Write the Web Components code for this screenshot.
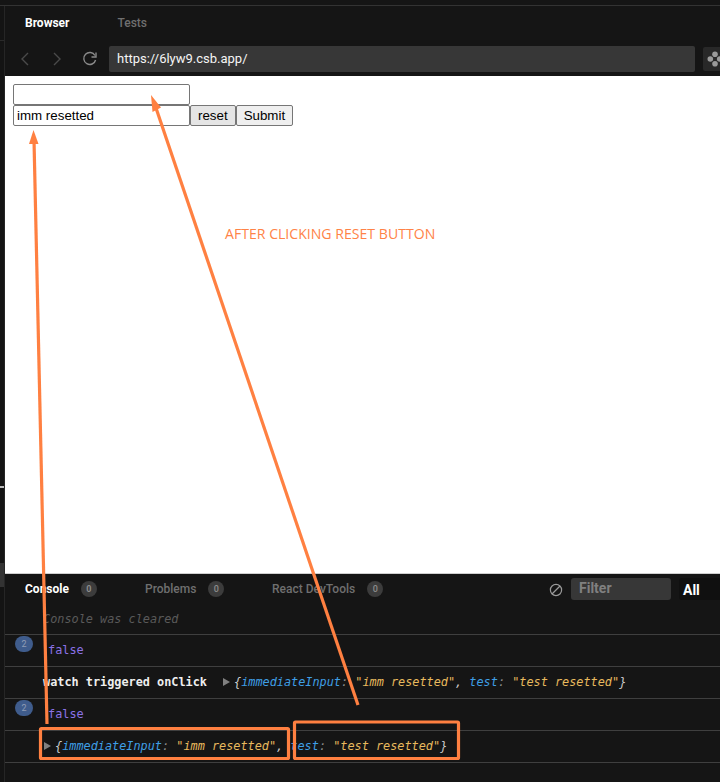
<!DOCTYPE html>
<html>
<head>
<meta charset="utf-8">
<style>
html, body { margin: 0; padding: 0; background: #151515; }
body { width: 720px; height: 782px; overflow: hidden; font-family: Roboto, "Liberation Sans", sans-serif; }
</style>
</head>
<body>
<sandbox-shell>
	<browser-panel url="https://6lyw9.csb.app/">
		<demo-form></demo-form>
	</browser-panel>
	<console-panel>
		<console-row kind="info">Console was cleared</console-row>
		<console-row count="2"><span style="color:#8b72e6">false</span></console-row>
		<console-row kind="log"><b style="color:#eee;font-weight:600;margin-right:15px">watch triggered onClick</b><log-object></log-object></console-row>
		<console-row count="2"><span style="color:#8b72e6">false</span></console-row>
		<console-row kind="log"><log-object></log-object></console-row>
	</console-panel>
	<note-overlay slot="overlay"></note-overlay>
</sandbox-shell>

<script>
const mono = '"DejaVu Sans Mono", "Liberation Mono", monospace';

class SandboxShell extends HTMLElement {
	constructor() {
		super();
		this.attachShadow({ mode: 'open' });
		this.shadowRoot.innerHTML = `
			<style>
				:host { display: block; position: relative; width: 720px; height: 782px; background: #151515; overflow: hidden; }
				.top { height: 5px; border-bottom: 1px solid #333; }
				.body { display: flex; height: 776px; }
				.rail { width: 4px; flex: none; background: #141414; border-right: 1px solid #262626; }
				.rail i { display: block; height: 1px; background: #2a2a2a; margin-top: 34px; }
				.rail u { display: block; height: 2px; background: #bbb; margin-top: 445px; }
				.rail b { display: block; height: 24px; background: #333; margin-top: 75px; }
				.main { flex: 1; min-width: 0; display: flex; flex-direction: column; }
			</style>
			<div class="top"></div>
			<div class="body">
				<div class="rail"><i></i><u></u><b></b></div>
				<div class="main"><slot></slot></div>
			</div>
			<slot name="overlay"></slot>
		`;
	}
}

class TabItem extends HTMLElement {
	constructor() {
		super();
		this.attachShadow({ mode: 'open' });
		this.shadowRoot.innerHTML = `
			<style>
				:host { display: inline-flex; align-items: center; font: 500 12px Roboto, sans-serif; color: #6f6f6f; }
				:host([active]) { color: #fff; font-weight: 700; }
				.badge { display: none; width: 16px; height: 16px; border-radius: 50%; background: #3c3c3c; color: #8c8c8c;
					font-size: 9px; line-height: 16px; text-align: center; margin-left: 12px; }
				:host([badge]) .badge { display: block; }
			</style>
			<slot></slot><span class="badge">${this.getAttribute('badge') || ''}</span>
		`;
	}
}

class BrowserPanel extends HTMLElement {
	constructor() {
		super();
		this.attachShadow({ mode: 'open' });
		this.shadowRoot.innerHTML = `
			<style>
				:host { display: flex; flex-direction: column; height: 567px; flex: none; }
				.tabs { height: 34px; margin-bottom: 6px; display: flex; align-items: center; padding: 0 0 0 20px; gap: 48px; flex: none; }
				.bar { height: 30px; display: flex; align-items: flex-start; flex: none; }
				.nav { width: 104px; height: 26px; flex: none; }
				.nav svg { display: block; }
				.url { width: 586px; height: 26px; background: #373737; border-radius: 2px; flex: none; box-sizing: border-box;
					padding-left: 8px; color: #f5f5f5; font: 400 13px/26px Roboto, sans-serif; }
				.more { width: 30px; height: 24px; margin: 1px 0 0 8px; background: #282828; border-radius: 2px; flex: none; }
				.more svg { display: block; }
				.page { flex: 1; background: #fff; box-sizing: border-box; padding: 8px; color: #000; }
			</style>
			<div class="tabs">
				<tab-item active>Browser</tab-item>
				<tab-item>Tests</tab-item>
			</div>
			<div class="bar">
				<div class="nav">
					<svg width="104" height="26" viewBox="0 0 104 26" fill="none">
						<path d="M23 7 L17 13 L23 19" stroke="#4a4a4a" stroke-width="1.4"/>
						<path d="M49 7 L55 13 L49 19" stroke="#4a4a4a" stroke-width="1.4"/>
						<path d="M90 9.5 A6 6 0 1 0 90.6 14" stroke="#8a8a8a" stroke-width="1.4"/>
						<path d="M91 6.5 V11 H86.5" stroke="#8a8a8a" stroke-width="1.4"/>
					</svg>
				</div>
				<div class="url">${this.getAttribute('url')}</div>
				<div class="more">
					<svg width="30" height="24" viewBox="0 0 30 24">
						<g fill="#9a9a9a">
							<circle cx="12" cy="7.3" r="2.8"/><circle cx="12" cy="16.7" r="2.8"/>
							<circle cx="7.3" cy="12" r="2.8"/><circle cx="16.7" cy="12" r="2.8"/>
						</g>
					</svg>
				</div>
			</div>
			<div class="page"><slot></slot></div>
		`;
	}
}

class DemoForm extends HTMLElement {
	constructor() {
		super();
		this.attachShadow({ mode: 'open' });
		this.shadowRoot.innerHTML = `
			<style>
				:host { display: block; font: 13.33px "Liberation Sans", sans-serif; }
				.row { display: flex; height: 21px; }
				.field { width: 177px; height: 21px; box-sizing: border-box; border: 1px solid #767676; border-radius: 2px;
					padding: 0 3px; line-height: 19px; background: #fff; color: #000; }
				button { height: 21px; box-sizing: border-box; border: 1px solid #767676; border-radius: 2px; padding: 0 7px;
					font: 13.33px "Liberation Sans", sans-serif; color: #000; background: #efefef; }
				button.hot { background: #e5e5e5; }
			</style>
			<div class="row"><div class="field"></div></div>
			<div class="row">
				<div class="field">imm resetted</div>
				<button class="hot">reset</button>
				<button>Submit</button>
			</div>
		`;
	}
}

class ConsolePanel extends HTMLElement {
	constructor() {
		super();
		this.attachShadow({ mode: 'open' });
		this.shadowRoot.innerHTML = `
			<style>
				:host { display: block; flex: 1; min-height: 0; background: #151515; border-top: 1px solid #cfcfcf; }
				.head { height: 30px; display: flex; align-items: center; padding-left: 20px; }
				tab-item { flex: none; }
				.t1 { width: 120px; }
				.t2 { width: 127px; }
				.tools { margin-left: auto; display: flex; align-items: center; }
				.tools svg { margin: 2px 8px 0 0; display: block; }
				.filter { width: 100px; height: 22px; background: #373737; border-radius: 3px; box-sizing: border-box; padding-left: 8px;
					font: 700 14px/20px Roboto, sans-serif; color: #808080; }
				.all { width: 41px; height: 22px; margin-left: 8px; box-sizing: border-box; padding-left: 4px; background: #101010;
					font: 700 14px/24px Roboto, sans-serif; color: #fff; border-radius: 3px 0 0 3px; }
			</style>
			<div class="head">
				<tab-item class="t1" active badge="0">Console</tab-item>
				<tab-item class="t2" badge="0">Problems</tab-item>
				<tab-item badge="0">React DevTools</tab-item>
				<div class="tools">
					<svg width="14" height="14" viewBox="0 0 14 14" fill="none" stroke="#9a9a9a" stroke-width="1.2">
						<circle cx="7" cy="7" r="5.6"/><path d="M3 11 L11 3"/>
					</svg>
					<div class="filter">Filter</div>
					<div class="all">All</div>
				</div>
			</div>
			<slot></slot>
		`;
	}
}

class ConsoleRow extends HTMLElement {
	constructor() {
		super();
		this.attachShadow({ mode: 'open' });
		const count = this.getAttribute('count');
		this.shadowRoot.innerHTML = `
			<style>
				:host { display: flex; height: 32px; box-sizing: border-box; border-bottom: 1px solid #3f3f3f; align-items: center;
					position: relative; font: 11.85px ${mono}; color: #ddd; padding: 0 0 2px 38px; white-space: nowrap; }
				:host([kind="info"]) { height: 31px; color: #5a5a5a; font-style: italic; padding-bottom: 1px; }
				:host([count]) { padding: 0 0 1px 43px; }
				.count { position: absolute; left: 10px; top: 1px; width: 18px; height: 16px; border-radius: 8px; background: #3f5c8c;
					color: #8f9db5; font: 9px/16px Roboto, sans-serif; text-align: center; }
			</style>
			${count ? `<span class="count">${count}</span>` : ''}
			<slot></slot>
		`;
	}
}

class LogObject extends HTMLElement {
	constructor() {
		super();
		this.attachShadow({ mode: 'open' });
		this.shadowRoot.innerHTML = `
			<style>
				:host { display: inline-flex; align-items: center; font: italic 11.85px ${mono}; color: #ccc; white-space: pre; }
				.tri { width: 0; height: 0; border-left: 7px solid #808080; border-top: 4px solid transparent; border-bottom: 4px solid transparent; margin: 0 4px 0 1px; }
				.k { color: #3f9fe6; }
				.s { color: #e8ba5e; }
				.c { color: #8a8a8a; }
			</style>
			<span class="tri"></span><span>{<span class="k">immediateInput</span><span class="c">:</span> <span class="s">"imm resetted"</span>, <span class="k">test</span><span class="c">:</span> <span class="s">"test resetted"</span>}</span>
		`;
	}
}

class NoteOverlay extends HTMLElement {
	constructor() {
		super();
		this.attachShadow({ mode: 'open' });
		this.shadowRoot.innerHTML = `
			<style>
				:host { position: absolute; inset: 0; display: block; pointer-events: none; }
				svg { position: absolute; left: 0; top: 0; }
				.label { position: absolute; left: 225px; top: 224px; font: 14.1px "Open Sans", sans-serif; color: #ff8347; white-space: nowrap; }
			</style>
			<svg width="720" height="782" viewBox="0 0 720 782" fill="none" stroke="#ff8041" stroke-width="3.2">
				<path d="M47 724 L34 140"/>
				<path d="M358 705 L156 108"/>
				<path d="M33.5 130 L38.5 144 L29 144 Z" fill="#ff8041" stroke="none"/>
				<path d="M151 95 L161 107.5 L152.5 112 Z" fill="#ff8041" stroke="none"/>
				<rect x="40.5" y="728.5" width="248" height="30" rx="1"/>
				<rect x="294.5" y="722" width="164" height="36.5" rx="1"/>
			</svg>
			<div class="label">AFTER CLICKING RESET BUTTON</div>
		`;
	}
}

customElements.define('sandbox-shell', SandboxShell);
customElements.define('tab-item', TabItem);
customElements.define('browser-panel', BrowserPanel);
customElements.define('demo-form', DemoForm);
customElements.define('console-panel', ConsolePanel);
customElements.define('console-row', ConsoleRow);
customElements.define('log-object', LogObject);
customElements.define('note-overlay', NoteOverlay);
</script>
</body>
</html>
